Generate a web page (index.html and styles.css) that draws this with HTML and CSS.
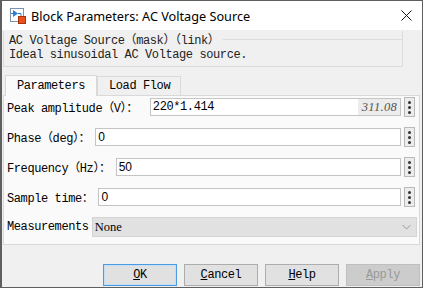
FILE: index.html
```html
<!DOCTYPE html>
<html lang="en">
<head>
  <meta charset="UTF-8" />
  <title>Block Parameters: AC Voltage Source</title>
  <link rel="stylesheet" href="styles.css">
</head>
<body>
  <div class="window">
    <div class="titlebar">
      <svg class="app-icon" width="16" height="16" viewBox="0 0 16 16">
        <rect x="0.5" y="0.5" width="13" height="13" fill="#fff" stroke="#7d93ad" />
        <path d="M3 2 L3 9 L8 5.5 Z" fill="#2f7fd6" />
        <path d="M1 5.5 H3 M8 5.5 H11 V9" stroke="#2f7fd6" fill="none" />
        <rect x="8.5" y="8.5" width="7" height="7" fill="#e8501e" stroke="#a8320c" />
      </svg>
      <span class="title">Block Parameters: AC Voltage Source</span>
      <svg class="close" width="11" height="11" viewBox="0 0 11 11">
        <path d="M0.5 0.5 L10.5 10.5 M10.5 0.5 L0.5 10.5" stroke="#111" stroke-width="1" />
      </svg>
    </div>

    <div class="content">
      <div class="desc">
        <div class="desc-head">
          <span>AC Voltage Source（mask）（link）</span>
          <span class="rule"></span>
        </div>
        <div class="desc-text">Ideal sinusoidal AC Voltage source.</div>
      </div>

      <div class="tabs">
        <div class="tab active">Parameters</div>
        <div class="tab">Load Flow</div>
      </div>

      <div class="panel">
        <div class="row">
          <label class="wide">Peak amplitude（V）：</label>
          <div class="field">
            <span class="value">220*1.414</span>
            <span class="result">311.08</span>
          </div>
          <div class="dots"><i></i><i></i><i></i></div>
        </div>
        <div class="row">
          <label>Phase（deg）：</label>
          <div class="field"><span class="value sans">0</span></div>
          <div class="dots"><i></i><i></i><i></i></div>
        </div>
        <div class="row">
          <label>Frequency（Hz）：</label>
          <div class="field"><span class="value sans">50</span></div>
          <div class="dots"><i></i><i></i><i></i></div>
        </div>
        <div class="row">
          <label>Sample time：</label>
          <div class="field"><span class="value sans">0</span></div>
          <div class="dots"><i></i><i></i><i></i></div>
        </div>
        <div class="row">
          <label class="tight">Measurements</label>
          <div class="select">
            <span>None</span>
            <svg width="9" height="6" viewBox="0 0 9 6">
              <path d="M0.5 1 L4.5 5 L8.5 1" stroke="#9a9a9a" fill="none" />
            </svg>
          </div>
        </div>
      </div>

      <div class="buttons">
        <button class="btn focus"><u>O</u>K</button>
        <button class="btn"><u>C</u>ancel</button>
        <button class="btn"><u>H</u>elp</button>
        <button class="btn disabled" disabled><u>A</u>pply</button>
      </div>
    </div>
  </div>
</body>
</html>
```

FILE: styles.css
```css
* {
  box-sizing: border-box;
}

body {
  margin: 0;
  background: #fff;
}

.window {
  width: 423px;
  height: 288px;
  border: 1px solid #5f5f5f;
  border-left-width: 2px;
  display: flex;
  flex-direction: column;
  font-family: "Liberation Mono", "Noto Sans CJK SC", monospace;
  font-size: 12px;
  letter-spacing: -0.4px;
  color: #000;
}

.titlebar {
  height: 29px;
  background: #fff;
  display: flex;
  align-items: center;
  padding-left: 8px;
  gap: 5px;
}

.title {
  font-family: "Noto Sans", sans-serif;
  font-size: 12.7px;
  letter-spacing: 0;
  flex: 1;
}

.close {
  margin-right: 10px;
}

.content {
  flex: 1;
  background: #f0f0f0;
  display: flex;
  flex-direction: column;
  padding: 1px 2px 0 1px;
}

.desc {
  margin-right: 17px;
  border-left: 1px solid #dcdcdc;
  border-right: 1px solid #dcdcdc;
  border-bottom: 1px solid #dcdcdc;
  padding-bottom: 3px;
}

.desc-head {
  display: flex;
  align-items: center;
  height: 16px;
  padding-left: 5px;
  color: #222;
}

.rule {
  flex: 1;
  border-top: 1px solid #dcdcdc;
  margin-left: 4px;
}

.desc-text {
  height: 16px;
  line-height: 16px;
  padding-left: 5px;
  color: #222;
}

.tabs {
  display: flex;
  align-items: flex-end;
  margin-top: 7px;
  padding-left: 2px;
  height: 21px;
}

.tab {
  height: 19px;
  line-height: 18px;
  padding: 0 10px 0 11px;
  background: #f0f0f0;
  border: 1px solid #d9d9d9;
  border-bottom: none;
}

.tab.active {
  height: 21px;
  line-height: 21px;
  background: #fafafa;
  padding: 0 11px 0 11px;
  margin-bottom: -1px;
  position: relative;
}

.panel {
  height: 150px;
  background: #fafafa;
  border: 1px solid #d9d9d9;
  padding: 1px 2px 0 3px;
  display: flex;
  flex-direction: column;
  gap: 10px;
}

.row {
  display: flex;
  align-items: center;
  height: 20px;
}

.row label {
  white-space: nowrap;
  margin-right: 5px;
}

.row label.wide {
  margin-right: 12px;
}

.row label.tight {
  margin-right: 1px;
}

.field {
  flex: 1;
  height: 18px;
  background: #fff;
  border: 1px solid #c4c4c4;
  display: flex;
  align-items: center;
  justify-content: space-between;
  padding-left: 2px;
}

.value.sans {
  font-family: "Liberation Sans", sans-serif;
  letter-spacing: 0;
  font-size: 12px;
}

.result {
  height: 16px;
  line-height: 16px;
  padding: 0 3px 0 4px;
  background: #ececec;
  color: #555;
  font-family: "Liberation Serif", serif;
  font-style: italic;
  font-size: 12.5px;
  letter-spacing: 0.3px;
}

.dots {
  width: 11px;
  height: 20px;
  margin-left: 3px;
  margin-right: 2px;
  background: #ececec;
  border: 1px solid #b9b9b9;
  display: flex;
  flex-direction: column;
  align-items: center;
  justify-content: center;
  gap: 2px;
}

.dots i {
  width: 3px;
  height: 3px;
  background: #333;
  border-radius: 50%;
}

.select {
  flex: 1;
  height: 20px;
  margin-left: 2px;
  background: #e1e1e1;
  border: 1px solid #d4d4d4;
  display: flex;
  align-items: center;
  justify-content: space-between;
  padding: 0 5px 0 2px;
  font-family: "Liberation Serif", serif;
  font-size: 12.5px;
  letter-spacing: 0;
}

.buttons {
  display: flex;
  justify-content: flex-end;
  gap: 7px;
  margin-top: 19px;
}

.btn {
  width: 74px;
  height: 22px;
  background: #e1e1e1;
  border: 1px solid #adadad;
  font-family: "Liberation Mono", monospace;
  font-size: 12px;
  letter-spacing: -0.4px;
  color: #000;
  padding: 0;
}

.btn.focus {
  border: 1px solid #4a9be0;
  box-shadow: inset 0 0 0 1px #c3def5;
}

.btn.disabled {
  background: #cccccc;
  border-color: #bfbfbf;
  color: #9a9a9a;
}
```
